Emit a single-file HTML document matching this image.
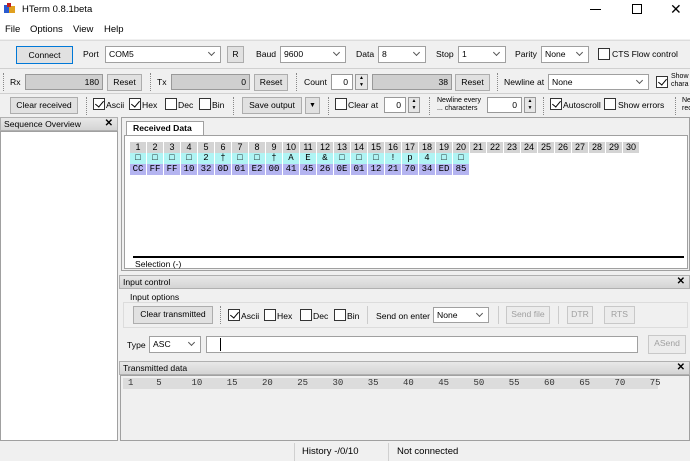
<!DOCTYPE html>
<html><head><meta charset="utf-8"><style>
*{box-sizing:border-box;margin:0;padding:0}
body{width:690px;height:461px;overflow:hidden;background:#f0f0f0;font-family:"Liberation Sans",sans-serif;font-size:8.6px;color:#000;position:relative}
div{white-space:nowrap}
.a{position:absolute}
.btn{position:absolute;background:#e1e1e1;border:1px solid #adadad;text-align:center;line-height:15px}
.cmb{position:absolute;background:#fff;border:1px solid #a0a0a0;padding-left:3px;line-height:15px}
.cmb:after{content:"";position:absolute;right:6px;top:3px;width:4px;height:4px;border-right:1px solid #555;border-bottom:1px solid #555;transform:rotate(45deg)}
.cb{position:absolute;width:12px;height:12px;border:1px solid #333;background:#fff}
.cb.on:after{content:"";position:absolute;left:3px;top:0px;width:4px;height:7px;border-right:1px solid #000;border-bottom:1px solid #000;transform:rotate(40deg)}
.fld{position:absolute;background:#cfcfcf;border:1px solid #999;text-align:right;padding-right:3px;line-height:14px}
.grip{position:absolute;width:2px;border-left:1px dotted #888}
.hdr{position:absolute;background:linear-gradient(#e8e8e8,#d4d4d4);border:1px solid #b0b0b0;padding-left:3px;line-height:12px}
.x{position:absolute;right:4px;top:0;font-weight:bold;font-size:10px}
.cell{position:absolute;width:16px;height:11px;text-align:center;line-height:11px;font-size:9px}
.dis{color:#a0a0a0;background:#ececec;border-color:#c8c8c8}
.sp{position:absolute;background:#e6e6e6;border:1px solid #999;font-size:5px;text-align:center;line-height:7px}
</style></head><body>
<!-- title -->
<div class="a" style="left:0;top:0;width:690px;height:21px;background:#fff"></div>
<div class="a" style="left:4px;top:5px;width:6px;height:8px;background:#2a5bd0"></div>
<div class="a" style="left:9px;top:6px;width:6px;height:7px;background:#e0a020"></div>
<div class="a" style="left:7px;top:3px;width:4px;height:4px;background:#c02020"></div>
<div class="a" style="left:22px;top:4px;font-size:9.5px">HTerm 0.8.1beta</div>
<div class="a" style="left:590px;top:9px;width:11px;height:1px;background:#000"></div>
<div class="a" style="left:632px;top:4px;width:10px;height:10px;border:1px solid #000"></div>
<div class="a" style="left:670px;top:1px;font-size:14px">✕</div>
<!-- menu -->
<div class="a" style="left:0;top:21px;width:690px;height:18px;background:#fff"></div>
<div class="a" style="left:5px;top:24px;font-size:9.5px">File</div>
<div class="a" style="left:30px;top:24px;font-size:9.5px">Options</div>
<div class="a" style="left:73px;top:24px;font-size:9.5px">View</div>
<div class="a" style="left:104px;top:24px;font-size:9.5px">Help</div>
<div class="a" style="left:0;top:40px;width:690px;height:1px;background:#dcdcdc"></div>
<!-- row1 -->
<div class="btn" style="left:16px;top:46px;width:57px;height:18px;border-color:#0078d7;line-height:16px">Connect</div>
<div class="a" style="left:83px;top:49px">Port</div>
<div class="cmb" style="left:105px;top:46px;width:116px;height:17px">COM5</div>
<div class="btn" style="left:227px;top:46px;width:17px;height:17px">R</div>
<div class="a" style="left:256px;top:49px">Baud</div>
<div class="cmb" style="left:280px;top:46px;width:66px;height:17px">9600</div>
<div class="a" style="left:356px;top:49px">Data</div>
<div class="cmb" style="left:378px;top:46px;width:48px;height:17px">8</div>
<div class="a" style="left:436px;top:49px">Stop</div>
<div class="cmb" style="left:458px;top:46px;width:48px;height:17px">1</div>
<div class="a" style="left:515px;top:49px">Parity</div>
<div class="cmb" style="left:541px;top:46px;width:48px;height:17px">None</div>
<div class="cb" style="left:598px;top:48px"></div>
<div class="a" style="left:612px;top:49px">CTS Flow control</div>
<div class="a" style="left:0;top:68px;width:690px;height:1px;background:#d0d0d0"></div>
<!-- row2 -->
<div class="grip" style="left:3px;top:73px;height:18px"></div>
<div class="a" style="left:10px;top:77px">Rx</div>
<div class="fld" style="left:25px;top:74px;width:78px;height:16px">180</div>
<div class="btn" style="left:107px;top:74px;width:35px;height:17px">Reset</div>
<div class="grip" style="left:150px;top:73px;height:18px"></div>
<div class="a" style="left:157px;top:77px">Tx</div>
<div class="fld" style="left:171px;top:74px;width:79px;height:16px">0</div>
<div class="btn" style="left:254px;top:74px;width:34px;height:17px">Reset</div>
<div class="grip" style="left:296px;top:73px;height:18px"></div>
<div class="a" style="left:304px;top:77px">Count</div>
<div class="a" style="left:331px;top:74px;width:22px;height:16px;background:#fff;border:1px solid #999;text-align:right;padding-right:4px;line-height:14px">0</div>
<div class="sp" style="left:355px;top:74px;width:13px;height:16px">▲<br>▼</div>
<div class="fld" style="left:372px;top:74px;width:80px;height:16px">38</div>
<div class="btn" style="left:455px;top:74px;width:35px;height:17px">Reset</div>
<div class="grip" style="left:497px;top:73px;height:18px"></div>
<div class="a" style="left:504px;top:77px">Newline at</div>
<div class="cmb" style="left:548px;top:74px;width:101px;height:16px;line-height:14px">None</div>
<div class="cb on" style="left:656px;top:76px"></div>
<div class="a" style="left:671px;top:73px;font-size:7px;line-height:8px">Show<br>chara</div>
<div class="a" style="left:0;top:93px;width:690px;height:1px;background:#d0d0d0"></div>
<!-- row3 -->
<div class="btn" style="left:10px;top:97px;width:68px;height:17px">Clear received</div>
<div class="grip" style="left:86px;top:97px;height:18px"></div>
<div class="cb on" style="left:93px;top:98px"></div><div class="a" style="left:106px;top:100px">Ascii</div>
<div class="cb on" style="left:129px;top:98px"></div><div class="a" style="left:142px;top:100px">Hex</div>
<div class="cb" style="left:165px;top:98px"></div><div class="a" style="left:178px;top:100px">Dec</div>
<div class="cb" style="left:199px;top:98px"></div><div class="a" style="left:212px;top:100px">Bin</div>
<div class="grip" style="left:233px;top:97px;height:18px"></div>
<div class="btn" style="left:242px;top:97px;width:60px;height:17px">Save output</div>
<div class="btn" style="left:305px;top:97px;width:15px;height:17px;font-size:7px">▼</div>
<div class="grip" style="left:328px;top:97px;height:18px"></div>
<div class="cb" style="left:335px;top:98px"></div><div class="a" style="left:348px;top:100px">Clear at</div>
<div class="a" style="left:384px;top:97px;width:22px;height:16px;background:#fff;border:1px solid #999;text-align:right;padding-right:4px;line-height:14px">0</div>
<div class="sp" style="left:408px;top:97px;width:12px;height:16px">▲<br>▼</div>
<div class="grip" style="left:429px;top:97px;height:18px"></div>
<div class="a" style="left:437px;top:97px;font-size:7px;line-height:8px">Newline every<br>... characters</div>
<div class="a" style="left:487px;top:97px;width:35px;height:16px;background:#fff;border:1px solid #999;text-align:right;padding-right:4px;line-height:14px">0</div>
<div class="sp" style="left:524px;top:97px;width:12px;height:16px">▲<br>▼</div>
<div class="grip" style="left:543px;top:97px;height:18px"></div>
<div class="cb on" style="left:550px;top:98px"></div><div class="a" style="left:563px;top:100px">Autoscroll</div>
<div class="cb" style="left:604px;top:98px"></div><div class="a" style="left:618px;top:100px">Show errors</div>
<div class="grip" style="left:675px;top:97px;height:18px"></div>
<div class="a" style="left:682px;top:97px;font-size:7px;line-height:8px">Ne<br>rec</div>
<!-- sequence overview -->
<div class="hdr" style="left:0;top:117px;width:118px;height:14px">Sequence Overview<span class="x">✕</span></div>
<div class="a" style="left:0;top:131px;width:118px;height:310px;background:#fff;border:1px solid #a0a0a0"></div>
<!-- received data -->
<div class="a" style="left:121px;top:117px;width:569px;height:154px;border:1px solid #a0a0a0"></div>
<div class="a" style="left:126px;top:121px;width:78px;height:15px;background:#fff;border:1px solid #a0a0a0;border-bottom:none;font-weight:bold;padding-left:6px;line-height:13px">Received Data</div>
<div class="a" style="left:124px;top:135px;width:564px;height:134px;background:#fff;border:1px solid #a0a0a0"></div>
<div id="grid"></div>
<div class="a" style="left:133px;top:256px;width:551px;height:2px;background:#000"></div>
<div class="a" style="left:135px;top:259px">Selection (-)</div>
<!-- input control -->
<div class="hdr" style="left:119px;top:275px;width:571px;height:14px">Input control<span class="x">✕</span></div>
<div class="a" style="left:130px;top:292px">Input options</div>
<div class="a" style="left:123px;top:302px;width:565px;height:26px;border:1px solid #dcdcdc"></div>
<div class="btn" style="left:133px;top:306px;width:80px;height:18px">Clear transmitted</div>
<div class="grip" style="left:220px;top:306px;height:18px"></div>
<div class="cb on" style="left:228px;top:309px"></div><div class="a" style="left:241px;top:311px">Ascii</div>
<div class="cb" style="left:264px;top:309px"></div><div class="a" style="left:277px;top:311px">Hex</div>
<div class="cb" style="left:300px;top:309px"></div><div class="a" style="left:313px;top:311px">Dec</div>
<div class="cb" style="left:334px;top:309px"></div><div class="a" style="left:347px;top:311px">Bin</div>
<div class="a" style="left:367px;top:306px;width:1px;height:18px;background:#ccc"></div>
<div class="a" style="left:376px;top:311px">Send on enter</div>
<div class="cmb" style="left:433px;top:307px;width:56px;height:16px;line-height:14px">None</div>
<div class="a" style="left:498px;top:306px;width:1px;height:18px;background:#ccc"></div>
<div class="btn dis" style="left:506px;top:306px;width:44px;height:18px">Send file</div>
<div class="a" style="left:558px;top:306px;width:1px;height:18px;background:#ccc"></div>
<div class="btn dis" style="left:567px;top:306px;width:26px;height:18px">DTR</div>
<div class="btn dis" style="left:604px;top:306px;width:31px;height:18px">RTS</div>
<div class="a" style="left:127px;top:340px">Type</div>
<div class="cmb" style="left:149px;top:336px;width:52px;height:17px">ASC</div>
<div class="a" style="left:206px;top:336px;width:432px;height:17px;background:#fff;border:1px solid #a0a0a0"></div>
<div class="a" style="left:220px;top:338px;width:1px;height:13px;background:#000"></div>
<div class="btn dis" style="left:648px;top:335px;width:38px;height:19px">ASend</div>
<!-- transmitted -->
<div class="hdr" style="left:119px;top:361px;width:571px;height:14px">Transmitted data<span class="x">✕</span></div>
<div class="a" style="left:120px;top:375px;width:570px;height:66px;background:#f0f0f0;border:1px solid #a0a0a0"></div>
<div class="a" style="left:123px;top:378px;width:535px;height:11px;background:#dcdcdc"></div>
<div id="ruler"></div>
<!-- status -->
<div class="a" style="left:0;top:442px;width:690px;height:19px;background:#f0f0f0"></div>
<div class="a" style="left:294px;top:443px;width:1px;height:18px;background:#d0d0d0"></div>
<div class="a" style="left:302px;top:446px;font-size:9.5px">History -/0/10</div>
<div class="a" style="left:388px;top:443px;width:1px;height:18px;background:#d0d0d0"></div>
<div class="a" style="left:397px;top:446px;font-size:9.5px">Not connected</div>
<script>
var g=document.getElementById('grid'),h='';
var asc=['\u25a1','\u25a1','\u25a1','\u25a1','2','\u2020','\u25a1','\u25a1','\u2020','A','E','&amp;','\u25a1','\u25a1','\u25a1','!','p','4','\u25a1','\u25a1'];
var hex=['CC','FF','FF','10','32','0D','01','E2','00','41','45','26','0E','01','12','21','70','34','ED','85'];
for(var i=0;i<30;i++){var x=130+i*17;
h+='<div class="cell a" style="left:'+x+'px;top:142px;background:#d4d4d4">'+(i+1)+'</div>';
if(i<20){h+='<div class="cell a" style="left:'+x+'px;top:153px;background:#b0f4f4;font-family:Liberation Mono,monospace">'+asc[i]+'</div>';
h+='<div class="cell a" style="left:'+x+'px;top:164px;background:#b4b4f0;font-family:Liberation Mono,monospace">'+hex[i]+'</div>';}}
g.innerHTML=h;
var r=document.getElementById('ruler'),s='';var n=[1,5,10,15,20,25,30,35,40,45,50,55,60,65,70,75];
for(var j=0;j<n.length;j++){s+='<div class="a" style="left:'+(128+(n[j]-1)*7.05)+'px;top:378px;font-family:Liberation Mono,monospace;font-size:9px;line-height:11px;color:#333">'+n[j]+'</div>';}
r.innerHTML=s;
</script>
</body></html>
